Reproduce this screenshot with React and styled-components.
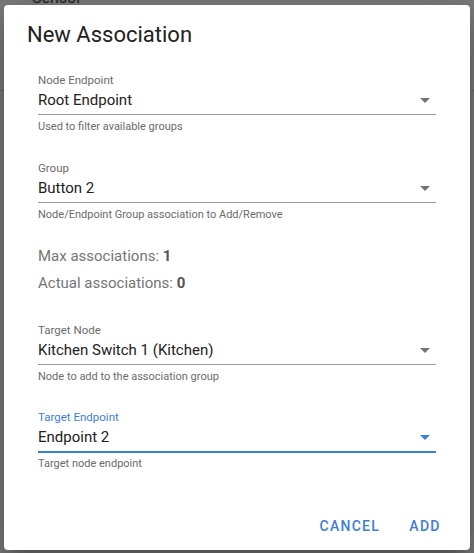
import React from "react";
import styled, { createGlobalStyle } from "styled-components";

const Global = createGlobalStyle`
  html, body { margin: 0; padding: 0; }
  body { font-family: Roboto, "Liberation Sans", Arial, sans-serif; background: #fff; }
  * { box-sizing: border-box; }
`;

const Page = styled.div`
  position: relative;
  width: 474px;
  height: 553px;
  overflow: hidden;
  background: #fff;
`;

const BackHeader = styled.div`
  padding-left: 32px;
  margin-top: -10px;
  font-size: 16px;
  line-height: 16px;
  color: #222;
`;

const BackRule = styled.div`
  margin-top: 84px;
  height: 1px;
  background: #ccc;
`;

const Overlay = styled.div`
  position: absolute;
  inset: 0;
  background: rgba(33, 33, 33, 0.6);
  padding: 5px 4px 3px 4px;
`;

const Dialog = styled.div`
  background: #fff;
  border-radius: 4px;
  box-shadow: 0 11px 15px -7px rgba(0,0,0,.2), 0 24px 38px 3px rgba(0,0,0,.14), 0 9px 46px 8px rgba(0,0,0,.12);
  display: flex;
  flex-direction: column;
  height: 545px;
`;

const Title = styled.h2`
  margin: 0;
  padding: 14px 23px 0;
  font-size: 22px;
  line-height: 32px;
  font-weight: 400;
  color: #212121;
  letter-spacing: 0;
`;

const Body = styled.div`
  padding: 22px 34px 0;
  display: flex;
  flex-direction: column;
`;

const Field = styled.div`
  display: flex;
  flex-direction: column;
  margin-bottom: ${(p) => p.$gap}px;
`;

const Label = styled.div`
  font-size: 11.5px;
  line-height: 14px;
  color: ${(p) => (p.$focused ? "#3f7dd2" : "#6b6b6b")};
`;

const SelectRow = styled.div`
  display: flex;
  align-items: center;
  height: 28px;
  padding-bottom: 2px;
  border-bottom: 1px solid ${(p) => (p.$focused ? "#3f7dd2" : "#9a9a9a")};
  box-shadow: ${(p) => (p.$focused ? "0 1px 0 #3f7dd2" : "none")};
`;

const Value = styled.div`
  flex: 1;
  font-size: 15px;
  line-height: 26px;
  color: #212121;
`;

const Arrow = styled.svg`
  width: 24px;
  height: 24px;
  margin-right: -1px;
  fill: ${(p) => (p.$focused ? "#3f7dd2" : "#757575")};
`;

const Hint = styled.div`
  margin-top: 5px;
  font-size: 11px;
  line-height: 14px;
  color: #6b6b6b;
`;

const Stats = styled.div`
  display: flex;
  flex-direction: column;
  margin-bottom: 26px;
`;

const Stat = styled.div`
  font-size: 15px;
  line-height: 27px;
  color: #757575;
  b { color: #555; font-weight: 700; }
`;

const Actions = styled.div`
  margin-top: auto;
  display: flex;
  justify-content: flex-end;
  padding: 0 13px 6px;
`;

const TextButton = styled.button`
  height: 36px;
  min-width: 64px;
  padding: 0 13px;
  border: none;
  background: transparent;
  font-family: Roboto, "Liberation Sans", Arial, sans-serif;
  font-size: 14px;
  font-weight: 500;
  letter-spacing: 1.25px;
  text-transform: uppercase;
  color: #3f7dd2;
  border-radius: 4px;
  cursor: pointer;
`;

function SelectField({ label, value, hint, focused, gap }) {
  return (
    <Field $gap={gap}>
      <Label $focused={focused}>{label}</Label>
      <SelectRow $focused={focused}>
        <Value>{value}</Value>
        <Arrow $focused={focused} viewBox="0 0 24 24">
          <path d="M7,10L12,15L17,10H7Z" />
        </Arrow>
      </SelectRow>
      <Hint>{hint}</Hint>
    </Field>
  );
}

export default function App() {
  return (
    <>
      <Global />
      <Page>
        <BackHeader>Sensor</BackHeader>
        <BackRule />
        <Overlay>
          <Dialog>
            <Title>New Association</Title>
            <Body>
              <SelectField
                label="Node Endpoint"
                value="Root Endpoint"
                hint="Used to filter available groups"
                gap={27}
              />
              <SelectField
                label="Group"
                value="Button 2"
                hint="Node/Endpoint Group association to Add/Remove"
                gap={21}
              />
              <Stats>
                <Stat>
                  Max associations: <b>1</b>
                </Stat>
                <Stat>
                  Actual associations: <b>0</b>
                </Stat>
              </Stats>
              <SelectField
                label="Target Node"
                value="Kitchen Switch 1 (Kitchen)"
                hint="Node to add to the association group"
                gap={26}
              />
              <SelectField
                label="Target Endpoint"
                value="Endpoint 2"
                hint="Target node endpoint"
                focused
                gap={0}
              />
            </Body>
            <Actions>
              <TextButton>Cancel</TextButton>
              <TextButton>Add</TextButton>
            </Actions>
          </Dialog>
        </Overlay>
      </Page>
    </>
  );
}
